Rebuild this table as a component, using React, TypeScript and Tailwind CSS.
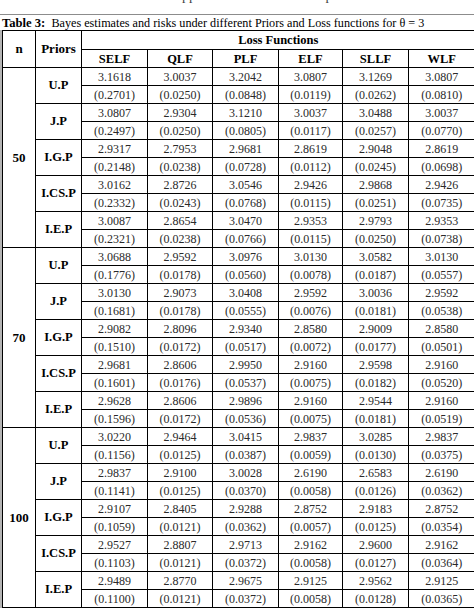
import React from "react";

type Prior = { name: string; est: string[]; risk: string[] };
type Group = { n: string; priors: Prior[] };

const groups: Group[] = [
  {
    n: "50",
    priors: [
      { name: "U.P", est: ["3.1618", "3.0037", "3.2042", "3.0807", "3.1269", "3.0807"], risk: ["(0.2701)", "(0.0250)", "(0.0848)", "(0.0119)", "(0.0262)", "(0.0810)"] },
      { name: "J.P", est: ["3.0807", "2.9304", "3.1210", "3.0037", "3.0488", "3.0037"], risk: ["(0.2497)", "(0.0250)", "(0.0805)", "(0.0117)", "(0.0257)", "(0.0770)"] },
      { name: "I.G.P", est: ["2.9317", "2.7953", "2.9681", "2.8619", "2.9048", "2.8619"], risk: ["(0.2148)", "(0.0238)", "(0.0728)", "(0.0112)", "(0.0245)", "(0.0698)"] },
      { name: "I.CS.P", est: ["3.0162", "2.8726", "3.0546", "2.9426", "2.9868", "2.9426"], risk: ["(0.2332)", "(0.0243)", "(0.0768)", "(0.0115)", "(0.0251)", "(0.0735)"] },
      { name: "I.E.P", est: ["3.0087", "2.8654", "3.0470", "2.9353", "2.9793", "2.9353"], risk: ["(0.2321)", "(0.0238)", "(0.0766)", "(0.0115)", "(0.0250)", "(0.0738)"] },
    ],
  },
  {
    n: "70",
    priors: [
      { name: "U.P", est: ["3.0688", "2.9592", "3.0976", "3.0130", "3.0582", "3.0130"], risk: ["(0.1776)", "(0.0178)", "(0.0560)", "(0.0078)", "(0.0187)", "(0.0557)"] },
      { name: "J.P", est: ["3.0130", "2.9073", "3.0408", "2.9592", "3.0036", "2.9592"], risk: ["(0.1681)", "(0.0178)", "(0.0555)", "(0.0076)", "(0.0181)", "(0.0538)"] },
      { name: "I.G.P", est: ["2.9082", "2.8096", "2.9340", "2.8580", "2.9009", "2.8580"], risk: ["(0.1510)", "(0.0172)", "(0.0517)", "(0.0072)", "(0.0177)", "(0.0501)"] },
      { name: "I.CS.P", est: ["2.9681", "2.8606", "2.9950", "2.9160", "2.9598", "2.9160"], risk: ["(0.1601)", "(0.0176)", "(0.0537)", "(0.0075)", "(0.0182)", "(0.0520)"] },
      { name: "I.E.P", est: ["2.9628", "2.8606", "2.9896", "2.9160", "2.9544", "2.9160"], risk: ["(0.1596)", "(0.0172)", "(0.0536)", "(0.0075)", "(0.0181)", "(0.0519)"] },
    ],
  },
  {
    n: "100",
    priors: [
      { name: "U.P", est: ["3.0220", "2.9464", "3.0415", "2.9837", "3.0285", "2.9837"], risk: ["(0.1156)", "(0.0125)", "(0.0387)", "(0.0059)", "(0.0130)", "(0.0375)"] },
      { name: "J.P", est: ["2.9837", "2.9100", "3.0028", "2.6190", "2.6583", "2.6190"], risk: ["(0.1141)", "(0.0125)", "(0.0370)", "(0.0058)", "(0.0126)", "(0.0362)"] },
      { name: "I.G.P", est: ["2.9107", "2.8405", "2.9288", "2.8752", "2.9183", "2.8752"], risk: ["(0.1059)", "(0.0121)", "(0.0362)", "(0.0057)", "(0.0125)", "(0.0354)"] },
      { name: "I.CS.P", est: ["2.9527", "2.8807", "2.9713", "2.9162", "2.9600", "2.9162"], risk: ["(0.1103)", "(0.0121)", "(0.0372)", "(0.0058)", "(0.0127)", "(0.0364)"] },
      { name: "I.E.P", est: ["2.9489", "2.8770", "2.9675", "2.9125", "2.9562", "2.9125"], risk: ["(0.1100)", "(0.0121)", "(0.0372)", "(0.0058)", "(0.0128)", "(0.0365)"] },
    ],
  },
];

const lossFns = ["SELF", "QLF", "PLF", "ELF", "SLLF", "WLF"];

const cell = "border border-black text-center p-0";
// the right edge of the table lies just past the picture
const edge = (i: number) => (i === 5 ? " border-r-0" : "");

export default function App() {
  return (
    <div className="w-[474px] h-[609px] overflow-hidden bg-white text-black font-['Liberation_Serif',serif]">
      {/* running head, only descenders left at the top */}
      <div className="h-[6px] overflow-hidden">
        <div className="-mt-[12px] pl-[172px] text-[14px] leading-[16px] text-[#444] whitespace-nowrap">
          Applied Statistics and Computation
        </div>
      </div>
      <div className="mt-[8px] h-px bg-[#8c8c8c]" />

      <div className="mt-px h-[14px] pl-[2px] text-[12.2px] leading-[14px] whitespace-nowrap">
        <span className="font-bold text-[12.6px]">Table 3:</span>&nbsp; Bayes estimates and risks under different Priors and Loss functions for θ = 3
      </div>

      <div className="border-l-[2px] border-[#b4b4b4]">
        <table className="table-fixed border-collapse w-[472px]">
          <colgroup>
            <col className="w-[33px]" />
            <col className="w-[46px]" />
            <col className="w-[66px]" />
            <col className="w-[65px]" />
            <col className="w-[66px]" />
            <col className="w-[64px]" />
            <col className="w-[66px]" />
            <col className="w-[66px]" />
          </colgroup>
          <thead>
            <tr className="h-[19px]">
              <th rowSpan={2} className={`${cell} text-[13px] font-bold`}>n</th>
              <th rowSpan={2} className={`${cell} text-[13px] font-bold`}>Priors</th>
              <th colSpan={6} className={`${cell} border-r-0 text-[12.5px] leading-[14px] font-bold`}>
                Loss Functions
              </th>
            </tr>
            <tr className="h-[18px]">
              {lossFns.map((f, i) => (
                <th key={f} className={`${cell}${edge(i)} text-[12.5px] leading-[14px] font-bold`}>{f}</th>
              ))}
            </tr>
          </thead>
          <tbody>
            {groups.map((g) =>
              g.priors.map((p, pi) => (
                <React.Fragment key={g.n + p.name}>
                  <tr className="h-[18px]">
                    {pi === 0 && (
                      <td rowSpan={10} className={`${cell} text-[13px] font-bold`}>{g.n}</td>
                    )}
                    <td rowSpan={2} className={`${cell} text-[12.5px] font-bold`}>{p.name}</td>
                    {p.est.map((v, i) => (
                      <td key={i} className={`${cell}${edge(i)} text-[12px] leading-[14px] text-[#2a2a2a]`}>{v}</td>
                    ))}
                  </tr>
                  <tr className="h-[18px]">
                    {p.risk.map((v, i) => (
                      <td key={i} className={`${cell}${edge(i)} text-[12px] leading-[14px] text-[#2a2a2a]`}>{v}</td>
                    ))}
                  </tr>
                </React.Fragment>
              ))
            )}
          </tbody>
        </table>
      </div>
    </div>
  );
}
